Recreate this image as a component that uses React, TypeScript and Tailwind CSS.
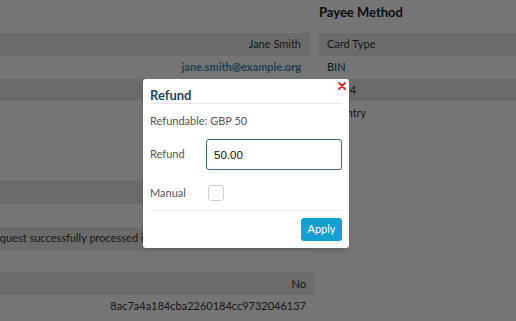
import React from "react"

const detailRows = [
  { value: "Jane Smith" },
  { value: "jane.smith@example.org", link: true },
  { value: "" },
  { value: "" },
]

const payeeRows = ["Card Type", "BIN", "Last 4", "Country"]

const transactionRows = [
  { value: "" },
  { value: "" },
  { value: "Request successfully processed in 182 ms", left: true },
  { value: "" },
  { value: "No" },
  { value: "8ac7a4a184cba2260184cc9732046137" },
]

function RefundModal() {
  return (
    <div className="absolute left-[143px] top-[79px] w-[206px] rounded-[3px] bg-white px-[7px] pb-[7px] shadow-md">
      <button className="absolute right-[3px] top-[3px] flex h-2 w-2 items-center justify-center">
        <svg width="8" height="8" viewBox="0 0 8 8" fill="none">
          <path d="M1 1L7 7M7 1L1 7" stroke="#e3242b" strokeWidth="1.8" strokeLinecap="round" />
        </svg>
      </button>

      <div className="border-b border-[#e8e8e8] pt-2">
        <h2 className="text-[13px] font-bold leading-4 text-[#1c4a63]">Refund</h2>
      </div>

      <p className="mt-[9px] leading-4 text-[#555]">Refundable: GBP 50</p>

      <div className="mt-[10px] flex items-center">
        <label className="w-[56px] text-[#555]">Refund</label>
        <input
          readOnly
          defaultValue="50.00"
          className="h-[31px] w-[136px] rounded-[3px] border border-[#3a6a88] pl-[7px] font-['Liberation_Sans',Arial,sans-serif] text-[11.5px] text-[#111] outline-none"
        />
      </div>

      <div className="mt-[15px] flex items-center">
        <label className="w-[56px] text-[#555]">Manual</label>
        <input
          type="checkbox"
          className="ml-[1.5px] h-4 w-4 appearance-none rounded-[3px] border border-[#cfcfcf] bg-white"
        />
      </div>

      <div className="mt-2 flex justify-end border-t border-[#eeeeee] pt-[7px]">
        <button className="h-[23px] w-[41px] rounded-[3px] bg-[#12a0d3] text-[11px] text-white">Apply</button>
      </div>
    </div>
  )
}

export default function App() {
  return (
    <div className="relative h-[321px] w-[516px] overflow-hidden bg-white font-['Lato',sans-serif] text-[11px] text-[#333]">
      <div className="flex gap-[5px]">
        <div className="w-[314px] shrink-0">
          <div className="h-[33px]" />
          <div className="w-[310px]">
            {detailRows.map((row, i) => (
              <div
                key={i}
                className={`flex h-[22.8px] items-center justify-end pr-[9px] ${i % 2 === 0 ? "bg-[#eaeaea]" : ""}`}
              >
                <span className={row.link ? "font-bold text-[#4a8bb0]" : ""}>{row.value}</span>
              </div>
            ))}
          </div>

          <div className="h-[57px]" />

          <div>
            {transactionRows.map((row, i) => (
              <div
                key={i}
                className={`flex h-[22.8px] items-center pr-2 ${row.left ? "justify-start" : "justify-end"} ${
                  i % 2 === 0 ? "bg-[#eaeaea]" : ""
                }`}
              >
                <span className={`whitespace-nowrap ${row.left ? "-ml-[12.5px]" : ""}`}>{row.value}</span>
              </div>
            ))}
          </div>
        </div>

        <div className="flex-1">
          <h3 className="h-[33px] pt-1 text-[13px] font-bold leading-4 text-[#222]">Payee Method</h3>
          {payeeRows.map((label, i) => (
            <div key={label} className={`flex h-[22.8px] items-center pl-2 ${i % 2 === 0 ? "bg-[#eaeaea]" : ""}`}>
              {label}
            </div>
          ))}
        </div>
      </div>

      <div className="absolute inset-0 bg-black/[0.54]" />

      <RefundModal />
    </div>
  )
}
